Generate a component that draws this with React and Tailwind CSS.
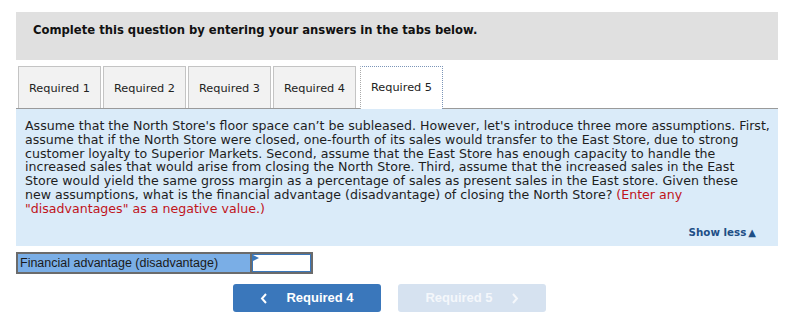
import React from "react";

const tabs = ["Required 1", "Required 2", "Required 3", "Required 4", "Required 5"];

const lines = [
    "Assume that the North Store's floor space can\u2019t be subleased. However, let's introduce three more assumptions. First,",
    "assume that if the North Store were closed, one-fourth of its sales would transfer to the East Store, due to strong",
    "customer loyalty to Superior Markets. Second, assume that the East Store has enough capacity to handle the",
    "increased sales that would arise from closing the North Store. Third, assume that the increased sales in the East",
    "Store would yield the same gross margin as a percentage of sales as present sales in the East store. Given these",
];

function App()
{
    return (
        <div className="w-[791px] h-[329px] bg-white pt-3 pl-4 pr-[13px]">
            <div className="h-12 bg-[#e0e0e0] flex items-center pl-[17px] pb-[10px] font-['DejaVu_Sans',sans-serif] font-bold text-[11.6px] text-[#111]">
                Complete this question by entering your answers in the tabs below.
            </div>

            <div className="mt-[6px] flex items-end h-[43px] border-b border-[#9a9a9a] pl-[2px]">
                {
                    tabs.map((tab, i) =>
                        i === 4 ? (
                            <div key={tab} className="w-[83px] h-[43px] -mb-px ml-[4px] bg-white border-t border-r border-l border-dotted border-t-[#7b95b8] border-r-[#7b95b8] border-l-[#aaa] flex items-center justify-center pt-[1px] font-['DejaVu_Sans',sans-serif] text-[11.3px] text-[#222]">
                                {tab}
                            </div>
                        ) : (
                            <div key={tab} className={"w-[83px] h-[42px] bg-[#f2f2f2] border border-b-0 border-[#c4c4c4] flex items-center justify-center pt-[3px] font-['DejaVu_Sans',sans-serif] text-[11.3px] text-[#222] " + (i === 0 ? "" : "ml-[2px]")}>
                                {tab}
                            </div>
                        )
                    )
                }
            </div>

            <div className="h-[137px] bg-[#daebf9] pl-[9px] pt-[10px] font-['DejaVu_Sans',sans-serif] text-[12.6px] leading-[13.8px] text-[#1e1e1e]">
                {lines.map(l => <div key={l} className="whitespace-nowrap">{l}</div>)}
                <div className="whitespace-nowrap">
                    new assumptions, what is the financial advantage (disadvantage) of closing the North Store? <span className="text-[#c0141b]">(Enter any</span>
                </div>
                <div className="whitespace-nowrap text-[#c0141b]">"disadvantages" as a negative value.)</div>
                <div className="flex justify-end pr-[22px] mt-[10px] font-['DejaVu_Sans',sans-serif] font-bold text-[10.3px] text-[#1f4f86]">
                    Show less<span className="ml-[2px] text-[10px]">&#9650;</span>
                </div>
            </div>

            <div className="mt-[6px] flex h-[22px]">
                <div className="w-[234px] h-[22px] bg-[#7aaee6] border-2 border-r-0 border-[#6b6b6b] flex items-center pl-[2px] font-['Liberation_Sans',sans-serif] text-[12.5px] text-[#1a1a1a]">
                    Financial advantage (disadvantage)
                </div>
                <div className="w-[63px] h-[22px] border-2 border-[#6b6b6b] relative">
                    <div className="w-full h-full border border-[#3a77bb] bg-white"></div>
                    <svg className="absolute left-[1px] top-[1px]" width="6" height="6" viewBox="0 0 6 6">
                        <polygon points="0,0 6,3 0,6" fill="#3a77bb" />
                    </svg>
                </div>
            </div>

            <div className="mt-[10px] flex pl-[217px] gap-[17px]">
                <div className="w-[148px] h-[28px] rounded-[3px] bg-[#3a77bb] flex items-center justify-center text-white font-['Liberation_Sans',sans-serif] font-bold text-[13px]">
                    <svg className="mr-[18px]" width="8" height="11" viewBox="0 0 8 11">
                        <polyline points="6,1 2,5.5 6,10" fill="none" stroke="white" strokeWidth="2" />
                    </svg>
                    Required 4
                </div>
                <div className="w-[148px] h-[28px] rounded-[3px] bg-[#d6e2f0] flex items-center justify-center text-[#f4f7fb] font-['Liberation_Sans',sans-serif] font-bold text-[13px]">
                    Required 5
                    <svg className="ml-[18px]" width="8" height="11" viewBox="0 0 8 11">
                        <polyline points="2,1 6,5.5 2,10" fill="none" stroke="#f4f7fb" strokeWidth="2" />
                    </svg>
                </div>
            </div>
        </div>
    );
}

export default App;
